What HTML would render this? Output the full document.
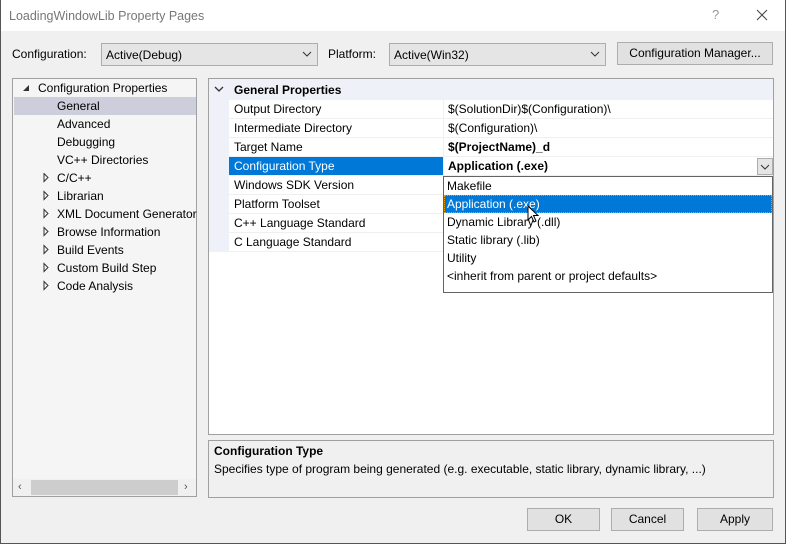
<!DOCTYPE html>
<html><head><style>
*{box-sizing:border-box;margin:0;padding:0}
body{width:786px;height:544px;background:#f0f0f0;font-family:"Liberation Sans",sans-serif;font-size:12px;color:#000;position:relative;overflow:hidden}
.a{position:absolute}
.t{white-space:nowrap;line-height:18px}
.combo{background:#e5e5e5;border:1px solid #adadad;height:23px}
.btn{background:#e1e1e1;border:1px solid #adadad;text-align:center;line-height:21px}
.row{position:absolute;left:229px;width:544px;height:19px;border-bottom:1px solid #f0f0f0;background:#fff}
.row span{position:absolute;line-height:18px;white-space:nowrap}
.dd span{position:absolute;left:3px;line-height:18px;white-space:nowrap}
</style></head><body>
<div class="a" style="left:0;top:0;width:786px;height:31px;background:#fff"></div>
<div class="a t" style="left:9px;top:7px;color:#777;font-size:12.5px">LoadingWindowLib Property Pages</div>
<div class="a t" style="left:712px;top:6px;color:#999;font-size:13px">?</div>
<svg class="a" style="left:756px;top:9px" width="12" height="12"><path d="M1 1L11 11M11 1L1 11" stroke="#444" stroke-width="1"/></svg>
<div class="a" style="left:0;top:0;width:1px;height:544px;background:#555"></div>
<div class="a" style="left:785px;top:0;width:1px;height:544px;background:#555"></div>
<div class="a" style="left:0;top:543px;width:786px;height:1px;background:#555"></div>

<div class="a t" style="left:12px;top:45px">Configuration:</div>
<div class="a combo" style="left:101px;top:43px;width:217px"><span class="a t" style="left:4px;top:2px">Active(Debug)</span></div>
<svg class="a" style="left:302px;top:51px" width="10" height="6"><path d="M1 1L5 5L9 1" stroke="#333" fill="none"/></svg>
<div class="a t" style="left:328px;top:45px">Platform:</div>
<div class="a combo" style="left:389px;top:43px;width:217px"><span class="a t" style="left:4px;top:2px">Active(Win32)</span></div>
<svg class="a" style="left:590px;top:51px" width="10" height="6"><path d="M1 1L5 5L9 1" stroke="#333" fill="none"/></svg>
<div class="a btn" style="left:617px;top:42px;width:156px;height:23px">Configuration Manager...</div>

<!-- tree -->
<div class="a" style="left:12px;top:78px;width:185px;height:419px;background:#f5f5f5;border:1px solid #a0a0a0"></div>
<div class="a" style="left:14px;top:97px;width:182px;height:18px;background:#cccedb"></div>
<svg class="a" style="left:22px;top:84px" width="8" height="8"><path d="M7 1L7 7L1 7Z" fill="#333"/></svg>
<div class="a t" style="left:38px;top:79px">Configuration Properties</div>
<div class="a t" style="left:57px;top:97px">General</div>
<div class="a t" style="left:57px;top:115px">Advanced</div>
<div class="a t" style="left:57px;top:133px">Debugging</div>
<div class="a t" style="left:57px;top:151px">VC++ Directories</div>
<div class="a t" style="left:57px;top:169px">C/C++</div>
<div class="a t" style="left:57px;top:187px">Librarian</div>
<div class="a t" style="left:57px;top:205px">XML Document Generator</div>
<div class="a t" style="left:57px;top:223px">Browse Information</div>
<div class="a t" style="left:57px;top:241px">Build Events</div>
<div class="a t" style="left:57px;top:259px">Custom Build Step</div>
<div class="a t" style="left:57px;top:277px">Code Analysis</div>
<svg class="a" style="left:43px;top:173px" width="6" height="120"><g fill="none" stroke="#333"><path d="M1 0.5L5 4.5L1 8.5Z"/><path d="M1 18.5L5 22.5L1 26.5Z"/><path d="M1 36.5L5 40.5L1 44.5Z"/><path d="M1 54.5L5 58.5L1 62.5Z"/><path d="M1 72.5L5 76.5L1 80.5Z"/><path d="M1 90.5L5 94.5L1 98.5Z"/><path d="M1 108.5L5 112.5L1 116.5Z"/></g></svg>
<div class="a" style="left:13px;top:479px;width:183px;height:17px;background:#f0f0f0"></div>
<div class="a" style="left:31px;top:480px;width:147px;height:15px;background:#cdcdcd"></div>
<div class="a t" style="left:18px;top:478px;color:#555;font-size:11px">‹</div>
<div class="a t" style="left:184px;top:478px;color:#555;font-size:11px">›</div>

<!-- grid -->
<div class="a" style="left:208px;top:78px;width:566px;height:357px;background:#fff;border:1px solid #a0a0a0"></div>
<div class="a" style="left:209px;top:79px;width:564px;height:21px;background:#eef1f8"></div>
<div class="a" style="left:209px;top:100px;width:20px;height:152px;background:#eef1f8"></div>
<svg class="a" style="left:214px;top:86px" width="10" height="6"><path d="M1 1L5 5L9 1" stroke="#333" stroke-width="1.3" fill="none"/></svg>
<div class="a t" style="left:234px;top:81px;font-weight:bold">General Properties</div>
<div class="row" style="top:100px"><span style="left:5px">Output Directory</span><span style="left:219px">$(SolutionDir)$(Configuration)\</span></div>
<div class="row" style="top:119px"><span style="left:5px">Intermediate Directory</span><span style="left:219px">$(Configuration)\</span></div>
<div class="row" style="top:138px"><span style="left:5px">Target Name</span><span style="left:219px;font-weight:bold">$(ProjectName)_d</span></div>
<div class="row" style="top:157px"><span style="left:0;width:214px;height:18px;background:#0078d7;color:#fff;padding-left:5px">Configuration Type</span><span style="left:219px;font-weight:bold">Application (.exe)</span></div>
<div class="a" style="left:757px;top:158px;width:16px;height:17px;background:#e5e5e5;border:1px solid #adadad"></div>
<svg class="a" style="left:760px;top:164px" width="10" height="6"><path d="M1 1L5 5L9 1" stroke="#333" fill="none"/></svg>
<div class="row" style="top:176px"><span style="left:5px">Windows SDK Version</span></div>
<div class="row" style="top:195px"><span style="left:5px">Platform Toolset</span></div>
<div class="row" style="top:214px"><span style="left:5px">C++ Language Standard</span></div>
<div class="row" style="top:233px"><span style="left:5px">C Language Standard</span></div>
<div class="a" style="left:443px;top:100px;width:1px;height:152px;background:#f0f0f0"></div>

<!-- dropdown -->
<div class="a dd" style="left:443px;top:176px;width:330px;height:117px;background:#fff;border:1px solid #646464">
<div class="a" style="left:0;top:18px;width:328px;height:18px;background:#0078d7;border:1px dotted #f0a000"></div>
<span style="top:0">Makefile</span>
<span style="top:18px;color:#fff">Application (.exe)</span>
<span style="top:36px">Dynamic Library (.dll)</span>
<span style="top:54px">Static library (.lib)</span>
<span style="top:72px">Utility</span>
<span style="top:90px">&lt;inherit from parent or project defaults&gt;</span>
</div>
<svg class="a" style="left:527px;top:205px" width="14" height="20"><path d="M1 1L1 15L4.5 11.5L7 17L9 16L6.5 10.5L11 10.5Z" fill="#fff" stroke="#000"/></svg>

<!-- description -->
<div class="a" style="left:208px;top:440px;width:566px;height:58px;background:#f0f0f0;border:1px solid #a0a0a0"></div>
<div class="a t" style="left:214px;top:442px;font-weight:bold">Configuration Type</div>
<div class="a t" style="left:214px;top:460px">Specifies type of program being generated (e.g. executable, static library, dynamic library, ...)</div>

<div class="a btn" style="left:527px;top:508px;width:73px;height:23px">OK</div>
<div class="a btn" style="left:611px;top:508px;width:73px;height:23px">Cancel</div>
<div class="a btn" style="left:697px;top:508px;width:76px;height:23px">Apply</div>
</body></html>
